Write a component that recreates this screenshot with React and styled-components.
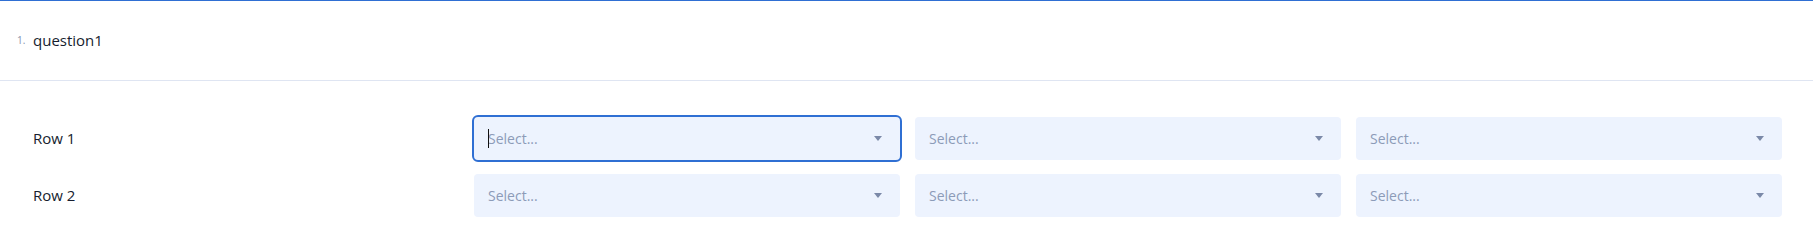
import styled, { createGlobalStyle } from "styled-components";
import { Fragment } from "react";

const GlobalStyle = createGlobalStyle`
    *, *::before, *::after {
        box-sizing: border-box;
    }
    html, body {
        margin: 0;
        padding: 0;
        background: #ffffff;
        font-family: "Open Sans", "Noto Sans", sans-serif;
    }
`;

const Wrapper = styled.div`
    width: 1813px;
    height: 242px;
    overflow: hidden;
    border-top: 1px solid #2f6fd3;
`;

const Header = styled.div`
    display: flex;
    align-items: center;
    height: 80px;
    padding: 0 0 2px 17px;
    border-bottom: 1px solid #dfe5f2;
`;

const QuestionNumber = styled.span`
    width: 16px;
    font-size: 10px;
    color: #8592ae;
`;

const QuestionTitle = styled.span`
    font-size: 15px;
    color: #161d2e;
`;

const Matrix = styled.div`
    display: grid;
    grid-template-columns: repeat(4, 1fr);
    grid-auto-rows: 43px;
    column-gap: 15px;
    row-gap: 14px;
    padding: 36px 31px 24px 33px;
`;

const RowLabel = styled.div`
    display: flex;
    align-items: center;
    padding-bottom: 2px;
    font-size: 15px;
    color: #161d2e;
`;

const SelectBox = styled.div`
    position: relative;
    display: flex;
    align-items: center;
    padding: 0 14px;
    border-radius: 4px;
    background: #edf3fe;
    outline: ${(p) => (p.$focused ? "2px solid #2f6fd3" : "none")};
    cursor: pointer;
`;

const Placeholder = styled.span`
    flex: 1;
    font-size: 14px;
    color: #8c9bb8;
`;

const Caret = styled.span`
    position: absolute;
    left: 14px;
    top: 12px;
    width: 1px;
    height: 19px;
    background: #111;
`;

const Arrow = styled.span`
    width: 0;
    height: 0;
    margin-right: 4px;
    border-left: 4.5px solid transparent;
    border-right: 4.5px solid transparent;
    border-top: 5px solid #7b89a8;
`;

const rows = ["Row 1", "Row 2"];
const columns = [1, 2, 3];

export default function App() {
    return (
        <Wrapper>
            <GlobalStyle />
            <Header>
                <QuestionNumber>1.</QuestionNumber>
                <QuestionTitle>question1</QuestionTitle>
            </Header>
            <Matrix>
                {rows.map((row, r) => (
                    <Fragment key={row}>
                        <RowLabel>{row}</RowLabel>
                        {columns.map((c) => {
                            const focused = r === 0 && c === 1;
                            return (
                                <SelectBox key={c} $focused={focused}>
                                    {focused && <Caret />}
                                    <Placeholder>Select...</Placeholder>
                                    <Arrow />
                                </SelectBox>
                            );
                        })}
                    </Fragment>
                ))}
            </Matrix>
        </Wrapper>
    );
}
